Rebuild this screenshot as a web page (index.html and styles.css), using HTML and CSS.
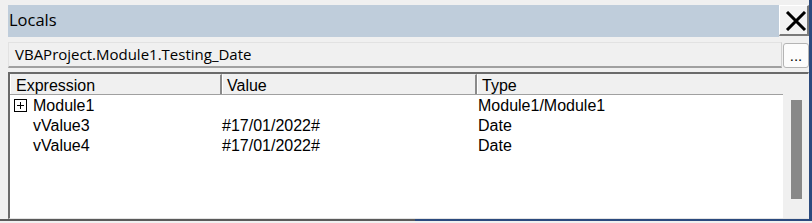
FILE: index.html
```html
<!DOCTYPE html>
<html>
<head>
<meta charset="utf-8">
<link rel="stylesheet" href="styles.css">
</head>
<body>
<div class="frame">
  <div class="titlerow">
    <div class="title">Locals</div>
    <div class="close">
      <svg width="22" height="20" viewBox="0 0 22 20"><path d="M2 1 L20 19 M20 1 L2 19" stroke="#000" stroke-width="3" fill="none"/></svg>
    </div>
  </div>
  <div class="pathrow">
    <div class="path">VBAProject.Module1.Testing_Date</div>
    <div class="more">...</div>
  </div>
  <div class="list">
    <div class="table">
      <div class="head">
        <div class="hc c1">Expression</div>
        <div class="hc c2">Value</div>
        <div class="hc c3">Type</div>
      </div>
      <div class="row">
        <div class="rc c1"><span class="plus"></span><span class="name">Module1</span></div>
        <div class="rc c2"></div>
        <div class="rc c3">Module1/Module1</div>
      </div>
      <div class="row">
        <div class="rc c1"><span class="name">vValue3</span></div>
        <div class="rc c2">#17/01/2022#</div>
        <div class="rc c3">Date</div>
      </div>
      <div class="row">
        <div class="rc c1"><span class="name">vValue4</span></div>
        <div class="rc c2">#17/01/2022#</div>
        <div class="rc c3">Date</div>
      </div>
    </div>
    <div class="scroll"><div class="thumb"></div></div>
  </div>
</div>
<div class="base"><div class="base-gray"></div><div class="base-blue"></div></div>
</body>
</html>
```

FILE: styles.css
```css
html, body {
  margin: 0;
  padding: 0;
}
body {
  background: #f0f0f0;
  width: 812px;
  height: 223px;
  overflow: hidden;
}
.frame {
  box-sizing: border-box;
  width: 812px;
  height: 219px;
  padding: 5px 0 0 8px;
  border-right: 3px solid #2b4a7e;
  display: flex;
  flex-direction: column;
}
.titlerow {
  display: flex;
  height: 32px;
}
.title {
  flex: 1;
  background: #bfcddb;
  font-family: "Open Sans", sans-serif;
  font-size: 16.5px;
  line-height: 30px;
  padding-left: 1px;
  color: #000;
}
.close {
  box-sizing: border-box;
  width: 30px;
  height: 31px;
  background: #f3f3f3;
  border-style: solid;
  border-width: 1px 2px 2px 1px;
  border-color: #ffffff #7a7a7a #7a7a7a #ffffff;
  display: flex;
  align-items: center;
  justify-content: center;
}
.close svg {
  display: block;
  margin-left: 4px;
  margin-top: 2px;
}
.pathrow {
  display: flex;
  margin-top: 5px;
  height: 26px;
}
.path {
  box-sizing: border-box;
  flex: 1;
  border-style: solid;
  border-width: 1px 1px 2px 1px;
  border-color: #e2e2e2 #d0d0d0 #a0a0a0 #e2e2e2;
  font-family: "Open Sans", sans-serif;
  font-size: 15px;
  line-height: 23px;
  padding-left: 6px;
  color: #000;
}
.more {
  box-sizing: border-box;
  width: 26px;
  height: 25px;
  margin-left: 1px;
  margin-top: 1px;
  background: #fcfcfc;
  border: 1px solid #b4b4b4;
  border-radius: 3px;
  font-family: "Liberation Sans", sans-serif;
  font-size: 15px;
  line-height: 24px;
  text-align: center;
  color: #000;
}
.list {
  flex: 1;
  margin-top: 4px;
  display: flex;
  border-top: 2px solid #6a6a6a;
  border-left: 2px solid #6a6a6a;
  border-right: 1px solid #f0f0f0;
  border-bottom: 1px solid #e3e3e3;
}
.table {
  width: 773px;
  background: #fff;
  font-family: "Liberation Sans", Arial, sans-serif;
  font-size: 16px;
  color: #000;
}
.head {
  display: flex;
  background: #f0f0f0;
  border-bottom: 1px solid #a0a0a0;
}
.hc {
  box-sizing: border-box;
  border-top: 1px solid #f0f0f0;
  border-left: 1px solid #ffffff;
  border-right: 2px solid #8a8a8a;
  padding: 2px 0 0 4px;
  line-height: 17px;
  height: 20px;
}
.c1 { width: 212px; }
.c2 { width: 255px; }
.c3 { width: 306px; }
.head .c1 { padding-left: 5px; }
.head .c3 { border-right: 0; }
.row {
  display: flex;
  height: 20px;
  line-height: 21px;
}
.rc {
  box-sizing: border-box;
  white-space: nowrap;
}
.row .c1 {
  display: flex;
  align-items: center;
  padding-left: 4px;
}
.row .c2 { padding-left: 0; }
.row .c3 { padding-left: 1px; }
.plus {
  box-sizing: border-box;
  width: 13px;
  height: 13px;
  border: 1px solid #000;
  position: relative;
  margin-top: 1px;
}
.plus::before, .plus::after {
  content: "";
  position: absolute;
  background: #000;
}
.plus::before { left: 2px; right: 2px; top: 5px; height: 1px; }
.plus::after { top: 2px; bottom: 2px; left: 5px; width: 1px; }
.name {
  margin-left: 19px;
}
.plus + .name {
  margin-left: 6px;
}
.scroll {
  width: 25px;
  background: #f0f0f0;
}
.thumb {
  width: 11px;
  height: 99px;
  margin-left: 8px;
  margin-top: 26px;
  background: #888888;
}
.base {
  display: flex;
  height: 2px;
}
.base-gray {
  width: 415px;
  background: #5a5a5a;
}
.base-blue {
  flex: 1;
  background: #2b4a7e;
}
```
